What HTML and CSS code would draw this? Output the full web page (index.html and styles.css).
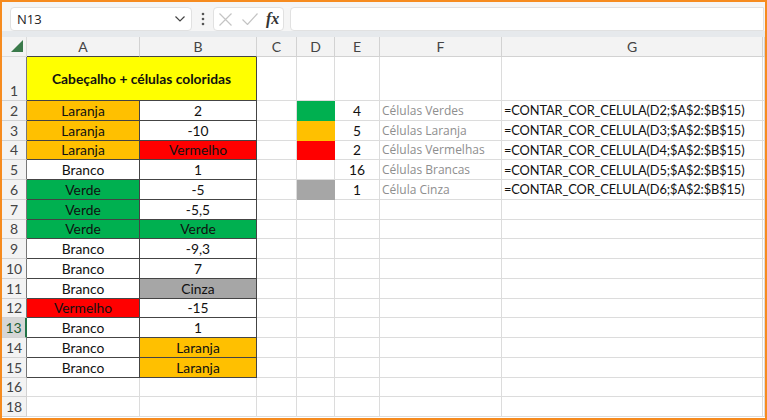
FILE: index.html
```html
<!DOCTYPE html>
<html lang="pt">
<head>
    <meta charset="UTF-8">
    <meta name="viewport" content="width=device-width, initial-scale=1.0">
    <title>Contar cor da célula</title>
    <link rel="stylesheet" href="styles.css">
</head>
<body>
    <div class="window">
        <div class="toolbar">
            <div class="name-box">
                <span>N13</span>
                <svg class="chevron" width="10" height="6" viewBox="0 0 10 6"><path d="M0.5 0.5 L5 5 L9.5 0.5" fill="none" stroke="#444" stroke-width="1.2"/></svg>
            </div>
            <div class="dots">
                <svg width="4" height="14" viewBox="0 0 4 14"><circle cx="2" cy="2" r="1.3" fill="#555"/><circle cx="2" cy="7" r="1.3" fill="#555"/><circle cx="2" cy="12" r="1.3" fill="#555"/></svg>
            </div>
            <div class="fx-box">
                <svg class="cancel" width="13" height="13" viewBox="0 0 13 13"><path d="M0.5 0.5 L12.5 12.5 M12.5 0.5 L0.5 12.5" stroke="#c4c4c4" stroke-width="1.2"/></svg>
                <svg class="enter" width="16" height="12" viewBox="0 0 16 12"><path d="M0.5 6.5 L5.5 11.5 L15.5 0.5" fill="none" stroke="#c4c4c4" stroke-width="1.2"/></svg>
                <span class="fx">fx</span>
            </div>
            <div class="formula-input"></div>
        </div>
        <div class="band"></div>

        <div class="sheet">
            <!-- column headers -->
            <div class="corner"><svg width="12" height="12" viewBox="0 0 12 12"><path d="M12 0 L12 12 L0 12 Z" fill="#3a7a4a"/></svg></div>
            <div class="ch edge">A</div>
            <div class="ch edge">B</div>
            <div class="ch">C</div>
            <div class="ch">D</div>
            <div class="ch">E</div>
            <div class="ch">F</div>
            <div class="ch">G</div>
            <div class="ch"></div>

            <!-- row 1 -->
            <div class="rh edge bottom">1</div>
            <div class="t yel title">Cabeçalho + células coloridas</div>
            <div class="c"></div><div class="c"></div><div class="c"></div><div class="c"></div><div class="c"></div><div class="c"></div>

            <!-- row 2 -->
            <div class="rh edge">2</div>
            <div class="t org">Laranja</div>
            <div class="t">2</div>
            <div class="c"></div>
            <div class="c sw-grn"></div>
            <div class="c num">4</div>
            <div class="c lbl">Células Verdes</div>
            <div class="c fml">=CONTAR_COR_CELULA(D2;$A$2:$B$15)</div>
            <div class="c"></div>

            <!-- row 3 -->
            <div class="rh edge">3</div>
            <div class="t org">Laranja</div>
            <div class="t">-10</div>
            <div class="c"></div>
            <div class="c sw-org"></div>
            <div class="c num">5</div>
            <div class="c lbl">Células Laranja</div>
            <div class="c fml">=CONTAR_COR_CELULA(D3;$A$2:$B$15)</div>
            <div class="c"></div>

            <!-- row 4 -->
            <div class="rh edge">4</div>
            <div class="t org">Laranja</div>
            <div class="t red">Vermelho</div>
            <div class="c"></div>
            <div class="c sw-red"></div>
            <div class="c num">2</div>
            <div class="c lbl">Células Vermelhas</div>
            <div class="c fml">=CONTAR_COR_CELULA(D4;$A$2:$B$15)</div>
            <div class="c"></div>

            <!-- row 5 -->
            <div class="rh edge">5</div>
            <div class="t">Branco</div>
            <div class="t">1</div>
            <div class="c"></div>
            <div class="c"></div>
            <div class="c num">16</div>
            <div class="c lbl">Células Brancas</div>
            <div class="c fml">=CONTAR_COR_CELULA(D5;$A$2:$B$15)</div>
            <div class="c"></div>

            <!-- row 6 -->
            <div class="rh edge">6</div>
            <div class="t grn">Verde</div>
            <div class="t">-5</div>
            <div class="c"></div>
            <div class="c sw-gry"></div>
            <div class="c num">1</div>
            <div class="c lbl">Célula Cinza</div>
            <div class="c fml">=CONTAR_COR_CELULA(D6;$A$2:$B$15)</div>
            <div class="c"></div>

            <!-- row 7 -->
            <div class="rh edge">7</div>
            <div class="t grn">Verde</div>
            <div class="t">-5,5</div>
            <div class="c"></div><div class="c"></div><div class="c"></div><div class="c"></div><div class="c"></div><div class="c"></div>

            <!-- row 8 -->
            <div class="rh edge">8</div>
            <div class="t grn">Verde</div>
            <div class="t grn">Verde</div>
            <div class="c"></div><div class="c"></div><div class="c"></div><div class="c"></div><div class="c"></div><div class="c"></div>

            <!-- row 9 -->
            <div class="rh edge">9</div>
            <div class="t">Branco</div>
            <div class="t">-9,3</div>
            <div class="c"></div><div class="c"></div><div class="c"></div><div class="c"></div><div class="c"></div><div class="c"></div>

            <!-- row 10 -->
            <div class="rh edge">10</div>
            <div class="t">Branco</div>
            <div class="t">7</div>
            <div class="c"></div><div class="c"></div><div class="c"></div><div class="c"></div><div class="c"></div><div class="c"></div>

            <!-- row 11 -->
            <div class="rh edge">11</div>
            <div class="t">Branco</div>
            <div class="t gry">Cinza</div>
            <div class="c"></div><div class="c"></div><div class="c"></div><div class="c"></div><div class="c"></div><div class="c"></div>

            <!-- row 12 -->
            <div class="rh edge">12</div>
            <div class="t red">Vermelho</div>
            <div class="t">-15</div>
            <div class="c"></div><div class="c"></div><div class="c"></div><div class="c"></div><div class="c"></div><div class="c"></div>

            <!-- row 13 (selected) -->
            <div class="rh selected">13</div>
            <div class="t">Branco</div>
            <div class="t">1</div>
            <div class="c"></div><div class="c"></div><div class="c"></div><div class="c"></div><div class="c"></div><div class="c"></div>

            <!-- row 14 -->
            <div class="rh edge">14</div>
            <div class="t">Branco</div>
            <div class="t org">Laranja</div>
            <div class="c"></div><div class="c"></div><div class="c"></div><div class="c"></div><div class="c"></div><div class="c"></div>

            <!-- row 15 -->
            <div class="rh edge">15</div>
            <div class="t">Branco</div>
            <div class="t org">Laranja</div>
            <div class="c"></div><div class="c"></div><div class="c"></div><div class="c"></div><div class="c"></div><div class="c"></div>

            <!-- row 16 -->
            <div class="rh">16</div>
            <div class="c"></div><div class="c"></div><div class="c"></div><div class="c"></div><div class="c"></div><div class="c"></div><div class="c"></div><div class="c"></div>

            <!-- row 18 -->
            <div class="rh">18</div>
            <div class="c"></div><div class="c"></div><div class="c"></div><div class="c"></div><div class="c"></div><div class="c"></div><div class="c"></div><div class="c"></div>
        </div>
    </div>
</body>
</html>
```

FILE: styles.css
```css
body {
    margin: 0;
    background-color: #fff;
    font-family: Lato, "Liberation Sans", sans-serif;
}
.window {
    width: 767px;
    height: 420px;
    box-sizing: border-box;
    border: 2px solid #f68b1f;
    overflow: hidden;
    background-color: #fff;
}

/* formula bar */
.toolbar {
    height: 29px;
    box-sizing: border-box;
    padding: 5px 0 0 8px;
    display: flex;
    background-color: #f5f5f5;
}
.name-box {
    width: 182px;
    height: 24px;
    box-sizing: border-box;
    border: 1px solid #e1e1e1;
    border-radius: 4px;
    background-color: #fff;
    display: flex;
    align-items: center;
    justify-content: space-between;
    padding: 0 6px 0 6px;
    font-family: "Open Sans", sans-serif;
    font-size: 13px;
    color: #222;
}
.dots {
    width: 21px;
    display: flex;
    align-items: center;
    justify-content: center;
}
.fx-box {
    width: 71px;
    height: 24px;
    box-sizing: border-box;
    border: 1px solid #e1e1e1;
    border-radius: 4px;
    background-color: #fff;
    display: flex;
    align-items: center;
    padding-left: 5px;
}
.enter {
    margin-left: 10px;
}
.fx {
    margin-left: 8px;
    font-family: "Liberation Serif", serif;
    font-style: italic;
    font-weight: bold;
    font-size: 16px;
    color: #333;
}
.formula-input {
    flex: 1;
    height: 24px;
    box-sizing: border-box;
    margin-left: 6px;
    margin-right: 1px;
    border: 1px solid #e1e1e1;
    border-radius: 4px 0 0 4px;
    background-color: #fff;
}
.band {
    height: 6px;
    background-color: #e6e9ec;
}

/* grid */
.sheet {
    display: grid;
    grid-template-columns: 25px 113px 117px 40px 38px 45px 122px 261px 1fr;
    grid-template-rows: 20px 44px repeat(16, 19.75px);
    font-size: 13.8px;
    color: #111;
}
.sheet > div {
    box-sizing: border-box;
    border-right: 1px solid #dcdcdc;
    border-bottom: 1px solid #dcdcdc;
    white-space: nowrap;
    overflow: hidden;
}
.corner {
    background-color: #f3f3f3;
    display: flex;
    align-items: flex-end;
    justify-content: flex-end;
    padding: 0 3px 4px 0;
}
.sheet > .ch {
    background-color: #f3f3f3;
    border-color: #d2d2d2;
    color: #444;
    font-size: 14px;
    display: flex;
    align-items: center;
    justify-content: center;
}
.sheet > .ch.edge {
    border-bottom-color: #444;
}
.sheet > .rh {
    background-color: #f3f3f3;
    border-color: #d2d2d2;
    color: #444;
    font-size: 14px;
    display: flex;
    align-items: center;
    justify-content: center;
}
.sheet > .rh.edge {
    border-right-color: #777;
}
.sheet > .rh.bottom {
    align-items: flex-end;
    padding-bottom: 1px;
}
.sheet > .rh.selected {
    background-color: #d6d6d6;
    border-right: 2px solid #217346;
    color: #1e5e34;
}

/* table A1:B15 */
.sheet > .t {
    border-color: #444;
    display: flex;
    align-items: center;
    justify-content: center;
}
.sheet > .title {
    grid-column: span 2;
    font-weight: bold;
    font-size: 13.8px;
}
.yel { background-color: #ffff00; }
.org { background-color: #ffc000; }
.red { background-color: #ff0000; }
.grn { background-color: #00b050; }
.gry { background-color: #a6a6a6; }

/* colour swatches in D */
.sheet > .sw-grn { background-color: #00b050; border-color: #00b050; }
.sheet > .sw-org { background-color: #ffc000; border-color: #ffc000; }
.sheet > .sw-red { background-color: #ff0000; border-color: #ff0000; }
.sheet > .sw-gry { background-color: #a6a6a6; border-color: #a6a6a6; }

.num {
    display: flex;
    align-items: center;
    justify-content: center;
}
.lbl {
    display: flex;
    align-items: center;
    padding-left: 2px;
    font-family: "Open Sans", sans-serif;
    font-size: 12px;
    color: #8e8e8e;
}
.fml {
    display: flex;
    align-items: center;
    padding-left: 2px;
    font-size: 12.8px;
    letter-spacing: -0.1px;
}
```
